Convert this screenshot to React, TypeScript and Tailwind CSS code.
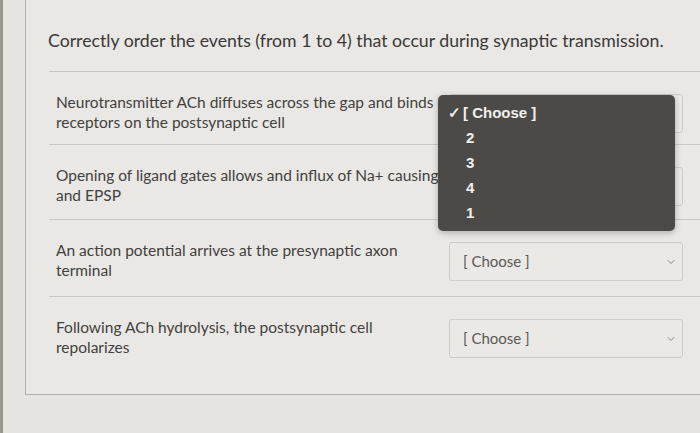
import React from 'react';
import { ChevronDown } from 'lucide-react';

const rows = [
  { text: 'Neurotransmitter ACh diffuses across the gap and binds receptors on the postsynaptic cell', h: 'h-[73px]', open: true },
  { text: 'Opening of ligand gates allows and influx of Na+ causing and EPSP', h: 'h-[75px]', open: true },
  { text: 'An action potential arrives at the presynaptic axon terminal', h: 'h-[77px]', open: false },
  { text: 'Following ACh hydrolysis, the postsynaptic cell repolarizes', h: 'h-[98px]', open: false },
];

const options = ['2', '3', '4', '1'];

// the first two selects sit under the open menu, so only their box shows
const Select: React.FC<{ covered?: boolean }> = ({ covered }) => (
  <div className="w-[234px] h-[39px] border border-[#cfccc6] rounded-[3px] bg-[#ebe9e5] flex items-center justify-between pl-[13px] pr-[5px]">
    <span className={`text-[15px] text-[#5a5855] ${covered ? 'invisible' : ''}`}>[ Choose ]</span>
    <ChevronDown className="w-[12px] h-[12px] text-[#8a8782]" strokeWidth={2} />
  </div>
);

export default function App() {
  return (
    <div
      className="relative w-[700px] h-[433px] overflow-hidden bg-[#e7e5e1] flex"
      style={{ fontFamily: 'Lato, "Open Sans", sans-serif' }}
    >
      <div className="w-[3px] bg-[#9c978f]" />
      <div className="flex-1 pl-[22px]">
        <div className="border-l border-b border-[#b3afa8] bg-[#eae8e4] h-[395px]">
          <div className="h-[72px] pt-[29px] border-b border-[#c9c5bf] ml-[23px] -mr-[1px]">
            <h1 className="text-[17.7px] text-[#3a3937] -ml-[1px] leading-[24px]">
              Correctly order the events (from 1 to 4) that occur during synaptic transmission.
            </h1>
          </div>
          {rows.map((row, i) => (
            <div
              key={i}
              className={`${row.h} ml-[23px] flex items-start pt-[20px] ${i < rows.length - 1 ? 'border-b border-[#cbc7c1]' : ''}`}
            >
              <p className="w-[400px] pl-[7px] pr-[8px] text-[15.5px] leading-[20px] text-[#42413e]">{row.text}</p>
              <div className="pt-[2px]">
                <Select covered={row.open} />
              </div>
            </div>
          ))}
        </div>
      </div>

      {/* open dropdown for the first row */}
      <div className="absolute left-[438px] top-[95px] w-[237px] h-[136px] rounded-[5px] bg-[#4c4a47] shadow-[0_2px_6px_rgba(0,0,0,0.25)] pt-[6px] text-[#f1f0ee] font-bold text-[15px]"
        style={{ fontFamily: '"Liberation Sans", Arial, sans-serif' }}
      >
        <div className="h-[25px] flex items-center">
          <span className="w-[25px] pl-[10px] text-[15px]">✓</span>
          <span>[ Choose ]</span>
        </div>
        {options.map((o) => (
          <div key={o} className="h-[25px] flex items-center pl-[28px]">
            {o}
          </div>
        ))}
      </div>
    </div>
  );
}
